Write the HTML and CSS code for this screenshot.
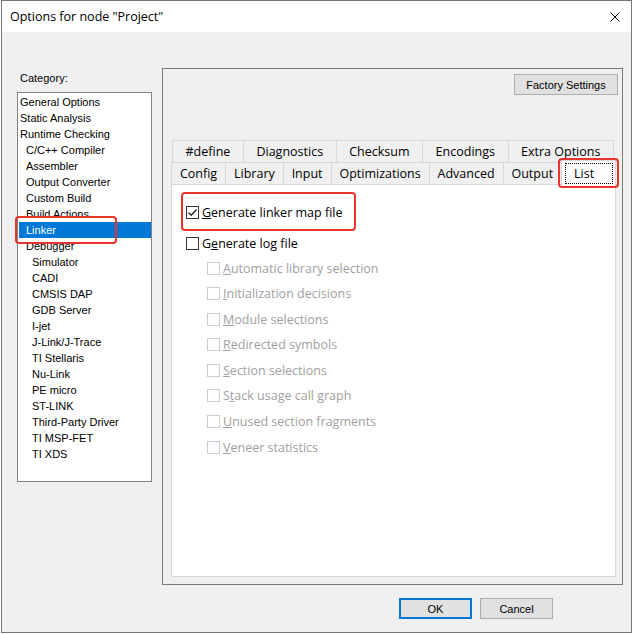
FILE: index.html
```html
<!DOCTYPE html>
<html lang="en">
<head>
    <meta charset="UTF-8">
    <title>Options for node "Project"</title>
    <link rel="stylesheet" href="styles.css">
</head>
<body>
    <div class="dialog">
        <div class="titlebar">
            <span class="title">Options for node "Project"</span>
            <svg class="close" width="10" height="10" viewBox="0 0 10 10">
                <path d="M0.5 0.5 L9.5 9.5 M9.5 0.5 L0.5 9.5" stroke="#000" stroke-width="1" fill="none"/>
            </svg>
        </div>

        <div class="client">
            <div class="main">
                <!-- category tree on the left -->
                <div class="category">
                    <div class="cat-label">Category:</div>
                    <ul class="cat-list">
                        <li class="lvl0">General Options</li>
                        <li class="lvl0">Static Analysis</li>
                        <li class="lvl0">Runtime Checking</li>
                        <li class="lvl1">C/C++ Compiler</li>
                        <li class="lvl1">Assembler</li>
                        <li class="lvl1">Output Converter</li>
                        <li class="lvl1">Custom Build</li>
                        <li class="lvl1">Build Actions</li>
                        <li class="lvl1 selected">Linker</li>
                        <li class="lvl1">Debugger</li>
                        <li class="lvl2">Simulator</li>
                        <li class="lvl2">CADI</li>
                        <li class="lvl2">CMSIS DAP</li>
                        <li class="lvl2">GDB Server</li>
                        <li class="lvl2">I-jet</li>
                        <li class="lvl2">J-Link/J-Trace</li>
                        <li class="lvl2">TI Stellaris</li>
                        <li class="lvl2">Nu-Link</li>
                        <li class="lvl2">PE micro</li>
                        <li class="lvl2">ST-LINK</li>
                        <li class="lvl2">Third-Party Driver</li>
                        <li class="lvl2">TI MSP-FET</li>
                        <li class="lvl2">TI XDS</li>
                    </ul>
                </div>

                <!-- settings group on the right -->
                <div class="group">
                    <button class="btn factory">Factory Settings</button>

                    <div class="tabs">
                        <div class="tab-row back">
                            <div class="tab">#define</div>
                            <div class="tab">Diagnostics</div>
                            <div class="tab">Checksum</div>
                            <div class="tab">Encodings</div>
                            <div class="tab">Extra Options</div>
                        </div>
                        <div class="tab-row front">
                            <div class="tab">Config</div>
                            <div class="tab">Library</div>
                            <div class="tab">Input</div>
                            <div class="tab">Optimizations</div>
                            <div class="tab">Advanced</div>
                            <div class="tab">Output</div>
                            <div class="tab active"><span class="focus">List</span></div>
                        </div>

                        <div class="tab-pane">
                            <label class="opt first">
                                <span class="box checked">
                                    <svg width="11" height="11" viewBox="0 0 11 11">
                                        <path d="M1.5 5.5 L4.2 8.2 L9.5 2.5" stroke="#222" stroke-width="1.3" fill="none"/>
                                    </svg>
                                </span>
                                <span><u>G</u>enerate linker map file</span>
                            </label>
                            <label class="opt">
                                <span class="box"></span>
                                <span>G<u>e</u>nerate log file</span>
                            </label>

                            <div class="sub-options">
                                <label class="opt disabled"><span class="box"></span><span><u>A</u>utomatic library selection</span></label>
                                <label class="opt disabled"><span class="box"></span><span><u>I</u>nitialization decisions</span></label>
                                <label class="opt disabled"><span class="box"></span><span><u>M</u>odule selections</span></label>
                                <label class="opt disabled"><span class="box"></span><span><u>R</u>edirected symbols</span></label>
                                <label class="opt disabled"><span class="box"></span><span><u>S</u>ection selections</span></label>
                                <label class="opt disabled"><span class="box"></span><span>S<u>t</u>ack usage call graph</span></label>
                                <label class="opt disabled"><span class="box"></span><span><u>U</u>nused section fragments</span></label>
                                <label class="opt disabled"><span class="box"></span><span><u>V</u>eneer statistics</span></label>
                            </div>
                        </div>
                    </div>
                </div>
            </div>

            <div class="footer">
                <button class="btn default">OK</button>
                <button class="btn">Cancel</button>
            </div>
        </div>

        <!-- red highlight marks drawn over the dialog -->
        <div class="mark mark-linker"></div>
        <div class="mark mark-map"></div>
        <div class="mark mark-list"></div>
    </div>
</body>
</html>
```

FILE: styles.css
```css
/* Page reset */
body {
    margin: 0;
    background-color: #fff;
}

/* Dialog frame */
.dialog {
    position: relative;
    box-sizing: border-box;
    width: 631px;
    height: 633px;
    margin-left: 1px;
    border: 1px solid #767676;
    background-color: #fff;
}

/* Title bar */
.titlebar {
    display: flex;
    align-items: center;
    justify-content: space-between;
    height: 31px;
    padding-left: 8px;
    background-color: #fff;
}

.title {
    font-family: "Open Sans", "Noto Sans", sans-serif;
    font-size: 12.5px;
    line-height: 31px;
    color: #000;
}

.close {
    margin-right: 11px;
}

/* Gray client area */
.client {
    height: 600px;
    background-color: #f0f0f0;
    font-family: "Liberation Sans", Arial, sans-serif;
    font-size: 11px;
}

.main {
    display: flex;
    align-items: flex-start;
    padding: 36px 0 0 15px;
}

/* Category tree */
.category {
    width: 135px;
    padding-top: 3px;
}

.cat-label {
    padding-left: 3px;
    line-height: 14px;
    color: #000;
}

.cat-list {
    box-sizing: border-box;
    height: 390px;
    margin: 7px 0 0 0;
    padding: 1px 0 0 0;
    list-style: none;
    background-color: #fff;
    border: 1px solid #828282;
}

.cat-list li {
    height: 16px;
    line-height: 16px;
    margin-left: 1px;
    color: #000;
    white-space: nowrap;
}

.cat-list .lvl0 { padding-left: 1px; }
.cat-list .lvl1 { padding-left: 7px; }
.cat-list .lvl2 { padding-left: 13px; }

.cat-list li.selected {
    background-color: #0078d7;
    color: #fff;
}

/* Group box on the right */
.group {
    box-sizing: border-box;
    display: flex;
    flex-direction: column;
    width: 461px;
    height: 517px;
    margin-left: 10px;
    border: 1px solid #7a7a7a;
}

/* Push buttons */
.btn {
    box-sizing: border-box;
    height: 21px;
    padding: 0;
    font-family: "Liberation Sans", Arial, sans-serif;
    font-size: 11px;
    color: #000;
    background-color: #e1e1e1;
    border: 1px solid #adadad;
}

.btn.factory {
    align-self: flex-end;
    width: 104px;
    margin: 5px 4px 0 0;
}

.btn.default {
    border-color: #0078d7;
    box-shadow: inset 0 0 0 1px #0078d7;
}

/* Tab control */
.tabs {
    display: flex;
    flex-direction: column;
    margin: 45px 6px 0 8px;
    font-family: "Open Sans", "Noto Sans", sans-serif;
    font-size: 12.5px;
    color: #000;
}

.tab-row {
    display: flex;
    height: 22px;
}

.tab-row.back {
    margin: 0 2px 0 1px;
}

.tab {
    box-sizing: border-box;
    flex: 1 1 auto;
    height: 22px;
    line-height: 21px;
    text-align: center;
    white-space: nowrap;
    background-color: #f0f0f0;
    border: 1px solid #d9d9d9;
    border-bottom: none;
}

.tab + .tab {
    margin-left: -1px;
}

.tab.active {
    position: relative;
    z-index: 1;
    flex: 0 0 55px;
    height: 25px;
    margin-top: -2px;
    padding: 2px 2px 1px 3px;
    text-align: left;
    background-color: #fff;
}

.tab.active .focus {
    display: block;
    box-sizing: border-box;
    height: 21px;
    padding-left: 8px;
    line-height: 19px;
    border: 1px dotted #000;
}

.tab-pane {
    box-sizing: border-box;
    height: 393px;
    padding: 17px 0 0 14px;
    background-color: #fff;
    border: 1px solid #d9d9d9;
}

/* Check box options */
.opt {
    display: flex;
    align-items: center;
    height: 20px;
    white-space: nowrap;
}

.opt.first {
    margin-bottom: 11px;
}

.box {
    box-sizing: border-box;
    display: flex;
    align-items: center;
    justify-content: center;
    width: 13px;
    height: 13px;
    margin-right: 3px;
    background-color: #fff;
    border: 1px solid #333;
}

.sub-options {
    display: flex;
    flex-direction: column;
    gap: 5.6px;
    margin-top: 5px;
    padding-left: 21px;
}

.opt.disabled {
    color: #a0a0a0;
}

.opt.disabled .box {
    border-color: #cccccc;
}

/* Dialog buttons */
.footer {
    display: flex;
    justify-content: flex-end;
    gap: 8px;
    margin-top: 13px;
    padding-right: 78px;
}

.footer .btn {
    width: 73px;
}

/* Red annotation marks */
.mark {
    position: absolute;
    box-sizing: border-box;
    border: 2px solid #e8352c;
    border-radius: 4px;
    z-index: 2;
}

.mark-linker {
    left: 13px;
    top: 215px;
    width: 102px;
    height: 28px;
}

.mark-map {
    left: 179px;
    top: 191px;
    width: 175px;
    height: 39px;
}

.mark-list {
    left: 556px;
    top: 157px;
    width: 61px;
    height: 30px;
}
```
